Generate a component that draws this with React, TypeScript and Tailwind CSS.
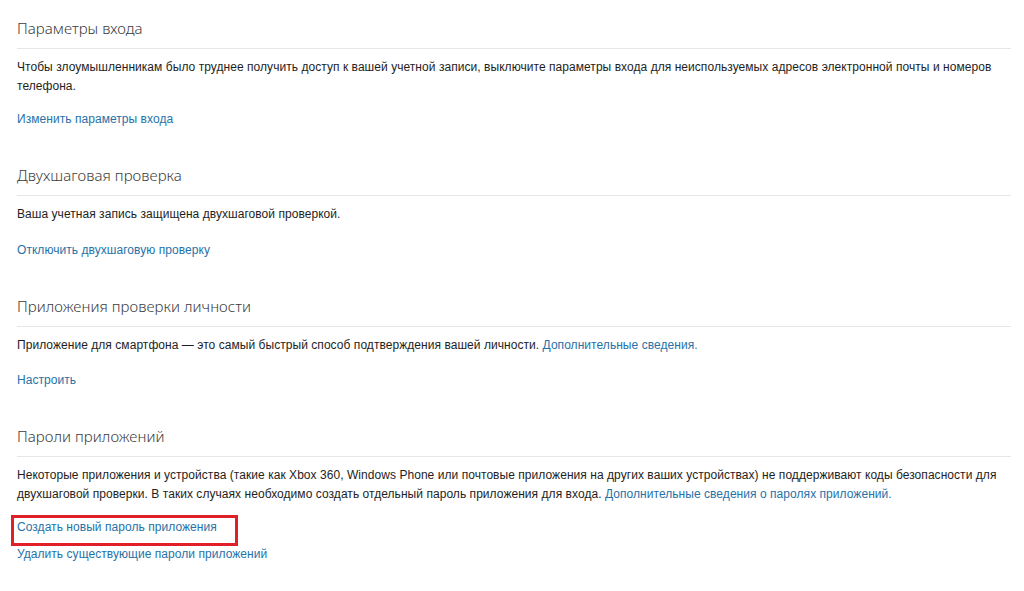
import React from "react";

const font = { fontFamily: '"Liberation Sans", Arial, sans-serif' };
const headFont = { fontFamily: '"Noto Sans", "Open Sans", sans-serif' };

function Heading({ children }: { children: React.ReactNode }) {
  return (
    <div>
      <h2 className="text-[15px] leading-[24px] font-light text-[#3c3c3c]" style={headFont}>{children}</h2>
      <div className="mt-[8px] h-px bg-[#e6e6e6]" />
    </div>
  );
}

const link = "text-[#2672a8]";

export default function App() {
  return (
    <div className="min-h-[591px] bg-white pl-[17px] pr-[13px] pt-[16px] text-[12px] tracking-[0.05px] leading-[19px] text-[#1e1e1e]" style={font}>
      <section>
        <Heading>Параметры входа</Heading>
        <p className="mt-[9px]">
          Чтобы злоумышленникам было труднее получить доступ к вашей учетной записи, выключите параметры входа для неиспользуемых адресов электронной почты и номеров телефона.
        </p>
        <div className={`mt-[14px] ${link}`}>Изменить параметры входа</div>
      </section>

      <section className="mt-[34px]">
        <Heading>Двухшаговая проверка</Heading>
        <p className="mt-[9px]">Ваша учетная запись защищена двухшаговой проверкой.</p>
        <div className={`mt-[17px] ${link}`}>Отключить двухшаговую проверку</div>
      </section>

      <section className="mt-[34px]">
        <Heading>Приложения проверки личности</Heading>
        <p className="mt-[9px]">
          Приложение для смартфона — это самый быстрый способ подтверждения вашей личности.{" "}
          <span className={link}>Дополнительные сведения.</span>
        </p>
        <div className={`mt-[16px] ${link}`}>Настроить</div>
      </section>

      <section className="mt-[34px]">
        <Heading>Пароли приложений</Heading>
        <p className="mt-[9px]">
          Некоторые приложения и устройства (такие как Xbox 360, Windows Phone или почтовые приложения на других ваших устройствах) не поддерживают коды безопасности для двухшаговой проверки. В таких случаях необходимо создать отдельный пароль приложения для входа.{" "}
          <span className={link}>Дополнительные сведения о паролях приложений.</span>
        </p>
        <div className="mt-[14px]">
          <span className={`relative inline-block ${link}`}>
            Создать новый пароль приложения
            <span className="pointer-events-none absolute left-[-6px] top-[-3px] h-[31px] w-[227px] border-[3px] border-[#e01f28]" />
          </span>
        </div>
        <div className={`mt-[8px] ${link}`}>Удалить существующие пароли приложений</div>
      </section>
    </div>
  );
}
